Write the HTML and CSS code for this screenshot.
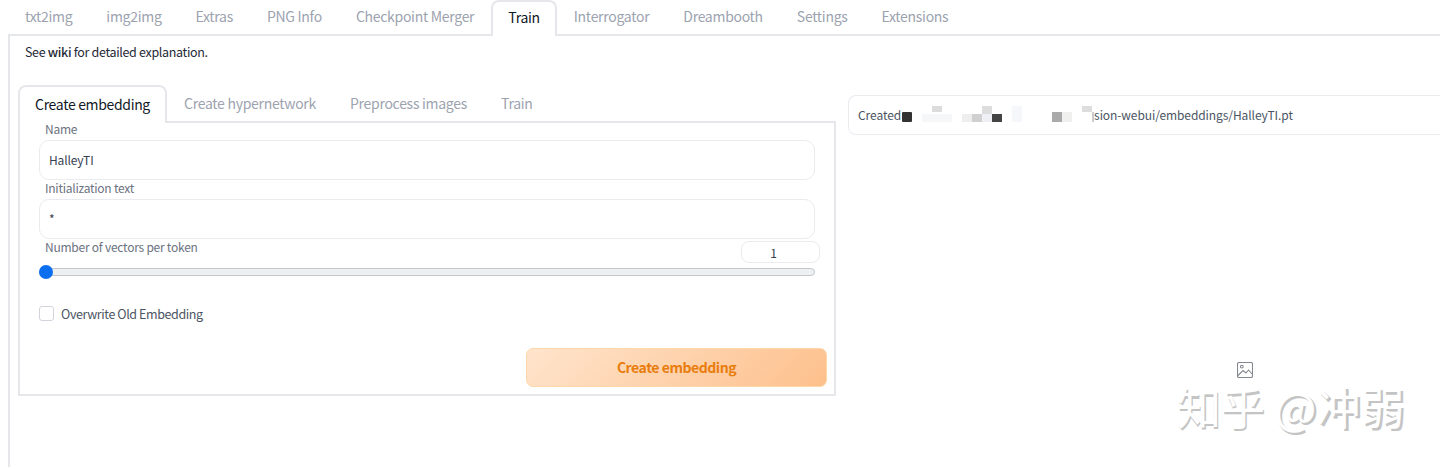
FILE: index.html
```html
<!DOCTYPE html>
<html lang="en">
<head>
  <meta charset="UTF-8" />
  <meta name="viewport" content="width=device-width, initial-scale=1.0"/>
  <title>Stable Diffusion</title>
  <link rel="stylesheet" href="styles.css">
</head>
<body>

  <nav class="top-tabs">
    <button class="tab">txt2img</button>
    <button class="tab">img2img</button>
    <button class="tab">Extras</button>
    <button class="tab">PNG Info</button>
    <button class="tab">Checkpoint Merger</button>
    <button class="tab active">Train</button>
    <button class="tab">Interrogator</button>
    <button class="tab">Dreambooth</button>
    <button class="tab">Settings</button>
    <button class="tab">Extensions</button>
  </nav>

  <main class="panel">
    <p class="note">See <b>wiki</b> for detailed explanation.</p>

    <div class="columns">
      <section class="left">
        <nav class="sub-tabs">
          <button class="sub-tab active">Create embedding</button>
          <button class="sub-tab">Create hypernetwork</button>
          <button class="sub-tab">Preprocess images</button>
          <button class="sub-tab">Train</button>
        </nav>

        <div class="form">
          <label class="field-label">Name</label>
          <input class="text-input" type="text" value="HalleyTI">

          <label class="field-label">Initialization text</label>
          <input class="text-input" type="text" value="*">

          <div class="slider-head">
            <label class="field-label">Number of vectors per token</label>
            <input class="number-input" type="text" value="1">
          </div>
          <div class="slider"><span class="thumb"></span></div>

          <div class="check-row">
            <span class="checkbox"></span>
            <span>Overwrite Old Embedding</span>
          </div>

          <div class="actions">
            <button class="primary">Create embedding</button>
          </div>
        </div>
      </section>

      <section class="right">
        <div class="output">
          <span>Created</span>
          <svg class="redacted" width="194" height="16" viewBox="0 0 194 16">
            <rect x="2" y="6" width="10" height="10" rx="1" fill="#333"/>
            <rect x="22" y="8" width="30" height="8" fill="#f6f7f8"/>
            <rect x="32" y="0" width="10" height="6" fill="#dcdcdc"/>
            <rect x="62" y="8" width="20" height="8" fill="#eee"/>
            <rect x="72" y="8" width="10" height="8" fill="#d0d0d0"/>
            <rect x="82" y="0" width="10" height="8" fill="#ddd"/>
            <rect x="82" y="8" width="10" height="8" fill="#eef0f5"/>
            <rect x="92" y="8" width="10" height="8" fill="#444"/>
            <rect x="112" y="0" width="10" height="16" fill="#f6f7fa"/>
            <rect x="152" y="6" width="10" height="10" fill="#aaa"/>
            <rect x="162" y="6" width="10" height="10" fill="#f0f0ee"/>
            <rect x="182" y="0" width="10" height="6" fill="#ddd"/>
            <rect x="192" y="6" width="2" height="10" fill="#ccc"/>
          </svg>
          <span>sion-webui/embeddings/HalleyTI.pt</span>
        </div>
        <div class="image-slot">
          <svg width="16" height="16" viewBox="0 0 16 16" fill="none" stroke="#84888f" stroke-width="1.1">
            <rect x="0.5" y="0.5" width="15" height="15" rx="1.5"/>
            <circle cx="4.8" cy="4.6" r="1.4"/>
            <path d="M1 13.5 L6 8.5 L9 11 L11.5 8 L15 12"/>
          </svg>
        </div>
      </section>
    </div>
  </main>

  <div class="watermark" data-text="知乎 @冲弱">知乎 @冲弱</div>

</body>
</html>
```

FILE: styles.css
```css
* {
  box-sizing: border-box;
}

html, body {
  height: 469px;
  overflow: hidden;
}

body {
  margin: 0;
  background-color: #fff;
  color: #374151;
  font-family: "Noto Sans CJK SC", "Noto Sans", sans-serif;
  font-size: 14px;
  position: relative;
}

button, input {
  font: inherit;
}

.top-tabs {
  display: flex;
  height: 36px;
  padding-left: 8px;
}

.tab {
  height: 36px;
  padding: 0 15px 5px;
  background: none;
  border: 2px solid transparent;
  border-top: 0;
  border-bottom: 0;
  color: #9ca3af;
  font-size: 14px;
  letter-spacing: -0.29px;
  line-height: 30px;
  white-space: nowrap;
}

.tab.active {
  position: relative;
  z-index: 1;
  padding-bottom: 7px;
  background-color: #fff;
  border: 2px solid #e5e7eb;
  border-bottom: 0;
  border-radius: 8px 8px 0 0;
  color: #111827;
}

.panel {
  height: 433px;
  margin-top: -2px;
  margin-left: 8px;
  border-top: 2px solid #e5e7eb;
  border-left: 2px solid #e5e7eb;
  padding: 0 0 0 8px;
}

.note {
  margin: 0;
  padding: 6px 0 0 7px;
  height: 49px;
  font-size: 12.5px;
  letter-spacing: -0.33px;
  line-height: 20px;
  color: #1f2937;
}

.note b {
  font-weight: 500;
}

.columns {
  display: grid;
  grid-template-columns: 818px 600px;
  gap: 12px;
}

.sub-tabs {
  display: flex;
  height: 38px;
}

.sub-tab {
  height: 38px;
  padding: 0 17px 2px;
  background: none;
  border: 0;
  color: #9ca3af;
  font-size: 14px;
  letter-spacing: -0.28px;
  white-space: nowrap;
}

.sub-tab.active {
  position: relative;
  z-index: 1;
  width: 149px;
  padding: 0 0 2px;
  background-color: #fff;
  border: 2px solid #e5e7eb;
  border-bottom: 0;
  border-radius: 8px 8px 0 0;
  color: #111827;
  letter-spacing: -0.33px;
}

.form {
  height: 275px;
  margin-top: -2px;
  padding: 0 7px 0 19px;
  border: 2px solid #e5e7eb;
}

.field-label {
  display: block;
  height: 17px;
  padding-left: 6px;
  color: #6b7280;
  font-size: 12px;
  letter-spacing: -0.24px;
  line-height: 12px;
}

.text-input {
  display: block;
  width: 776px;
  height: 40px;
  margin-bottom: 2px;
  padding: 0 9px 1px;
  background-color: #fff;
  border: 1px solid #e9ebef;
  border-radius: 10px;
  color: #374151;
  font-size: 12px;
  letter-spacing: -0.15px;
  outline: none;
}

.slider-head {
  display: flex;
  justify-content: space-between;
  height: 27px;
  width: 781px;
}

.number-input {
  width: 79px;
  height: 22px;
  padding: 0 14px 0 0;
  background-color: #fff;
  border: 1px solid #e9ebef;
  border-radius: 8px;
  color: #374151;
  font-size: 12px;
  text-align: center;
  outline: none;
}

.slider {
  position: relative;
  width: 776px;
  height: 8px;
  background-color: #eeeff1;
  border: 1px solid #c4c7cc;
  border-radius: 4px;
}

.thumb {
  position: absolute;
  left: -1px;
  top: -4px;
  width: 14px;
  height: 14px;
  background-color: #0b6fef;
  border-radius: 50%;
}

.check-row {
  display: flex;
  align-items: center;
  gap: 7px;
  height: 14px;
  margin-top: 30px;
  color: #4b5563;
  font-size: 12.5px;
  letter-spacing: -0.4px;
}

.checkbox {
  width: 15px;
  height: 15px;
  background-color: #fff;
  border: 1px solid #d1d5db;
  border-radius: 3px;
}

.actions {
  display: flex;
  justify-content: flex-end;
  margin-top: 28px;
}

.primary {
  width: 301px;
  height: 39px;
  padding-bottom: 2px;
  background: linear-gradient(135deg, #ffe4cc, #fdc08c);
  border: 1px solid #fed7aa;
  border-radius: 7px;
  color: #e87d0e;
  font-size: 14px;
  font-weight: 600;
  letter-spacing: -0.45px;
}

.right {
  padding-top: 10px;
}

.output {
  display: flex;
  align-items: center;
  height: 40px;
  padding: 0 0 2px 9px;
  border: 1px solid #e9ebef;
  border-right: 0;
  border-radius: 8px 0 0 8px;
  color: #4b5563;
  font-size: 12px;
  letter-spacing: -0.08px;
}

.redacted {
  flex: none;
  margin-left: -1px;
}

.image-slot {
  display: flex;
  justify-content: center;
  margin-top: 227px;
  padding-left: 194px;
}

.watermark {
  position: absolute;
  left: 1178px;
  top: 383px;
  color: #c4c4c4;
  font-size: 44px;
  line-height: 50px;
  letter-spacing: 0;
  white-space: nowrap;
  font-weight: 500;
}

/* white copy on top, gives the washed out stamp look */
.watermark::after {
  content: attr(data-text);
  position: absolute;
  left: -1px;
  top: -2px;
  color: #fff;
  font-weight: 400;
}
```
